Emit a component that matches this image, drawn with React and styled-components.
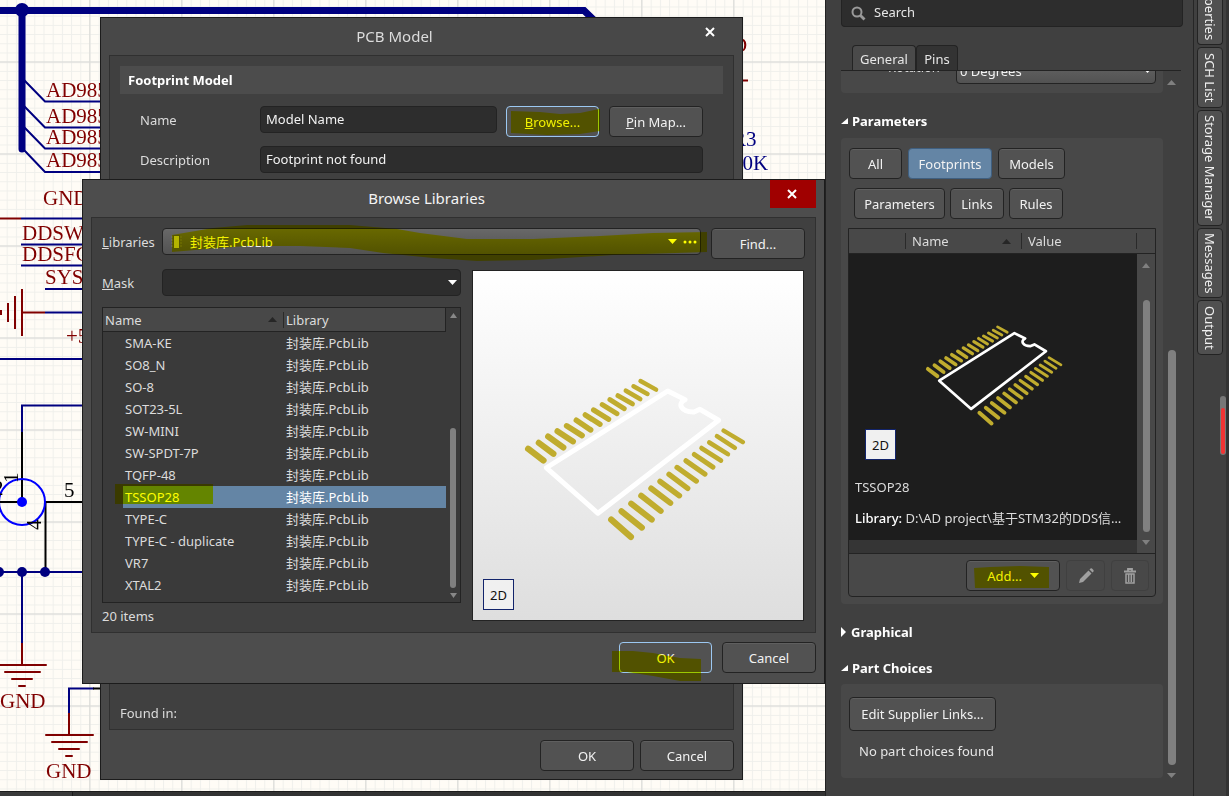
import React from "react";
import styled, { createGlobalStyle, css } from "styled-components";

const GlobalStyle = createGlobalStyle`
  *, *::before, *::after { box-sizing: border-box; }
  body {
    margin: 0;
    background: #404040;
    color: #dcdcdc;
    font: 13px/20px "Noto Sans", "Noto Sans CJK SC", sans-serif;
  }
  button, input, select { font: inherit; color: inherit; margin: 0; }
  h1, h2, h3, p { margin: 0; }
`;

const edge = "#232323";

/* ---------- page frame ---------- */

const Page = styled.div`
  display: grid;
  grid-template-columns: minmax(0, 1fr) 369px 35px;
  height: 100vh;
  overflow: hidden;
`;

const Editor = styled.main`
  display: flex;
  flex-direction: column;
  min-width: 0;
`;

const Canvas = styled.div`
  position: relative;
  flex: 1;
  overflow: hidden;
  background: #fffcf6;
`;

const Drawing = styled.svg`
  display: block;
  width: 100%;
  height: 100%;
`;

const StatusBar = styled.footer`
  height: 5px;
  background: #333;
  border-top: 1px solid #1c1c1c;
`;

const StatusTab = styled.div`
  width: 73px;
  height: 4px;
  border-right: 1px solid #1c1c1c;
  background: #3a3a3a;
`;

/* ---------- shared controls ---------- */

const Button = styled.button`
  display: inline-flex;
  align-items: center;
  justify-content: center;
  gap: 8px;
  flex: none;
  width: ${(p) => (p.$w ? `${p.$w}px` : "auto")};
  height: ${(p) => p.$h || 31}px;
  padding: 0;
  border: 1px solid ${edge};
  border-radius: 4px;
  background: #525252;
  box-shadow: inset 0 1px #5f5f5f;
  color: #f2f2f2;
  white-space: nowrap;
  ${(p) => p.$focused && css`border-color: #9cc8f2; box-shadow: none;`}
  ${(p) => p.$on && css`background: #6485a5; border-color: #3f5f80; box-shadow: none;`}
  ${(p) => p.$quiet && css`background: transparent; border-color: #404040; box-shadow: none; color: #909090;`}
`;

const Field = styled.input`
  width: ${(p) => (p.$w ? `${p.$w}px` : "100%")};
  height: 27px;
  padding: 0 5px 2px;
  border: 1px solid ${edge};
  border-radius: 4px;
  background: #2d2d2d;
  color: #f2f2f2;
  outline: none;
`;

const Combo = styled.div`
  display: flex;
  align-items: center;
  width: ${(p) => p.$w}px;
  height: 27px;
  border: 1px solid ${edge};
  border-radius: 4px;
  background: ${(p) => (p.$dark ? "#2d2d2d" : "linear-gradient(#686868, #525252)")};
  padding: 0 3px;
  gap: 6px;
  select, input {
    appearance: none;
    flex: 1;
    min-width: 0;
    border: 0;
    padding: 0;
    background: transparent;
    color: #f2f2f2;
    outline: none;
  }
`;

const Glyph = styled.svg`
  display: block;
  flex: none;
`;

const Arrow = ({ up, size = 9, color = "#fff" }) => (
  <Glyph width={size} height="5" viewBox="0 0 10 5" preserveAspectRatio="none">
    <path d={up ? "M0 5L5 0L10 5Z" : "M0 0L5 5L10 0Z"} fill={color} />
  </Glyph>
);

const DotsButton = styled.button`
  display: flex;
  padding: 0;
  border: 0;
  background: none;
`;

const Cross = () => (
  <Glyph width="10" height="10" viewBox="0 0 10 10">
    <path d="M1 1L9 9M9 1L1 9" stroke="#fff" strokeWidth="2" />
  </Glyph>
);

const ScrollTrack = styled.div`
  display: flex;
  flex-direction: column;
  align-items: center;
  width: ${(p) => p.$w}px;
  padding: ${(p) => p.$pad};
`;

const Thumb = styled.div`
  width: ${(p) => p.$w}px;
  height: ${(p) => p.$h}px;
  margin: auto 0 ${(p) => p.$gap}px;
  border-radius: 4px;
  background: #808080;
`;

/* ---------- dialog windows ---------- */

const Dialog = styled.section`
  position: absolute;
  left: ${(p) => p.$x}px;
  top: ${(p) => p.$y}px;
  display: flex;
  flex-direction: column;
  width: ${(p) => p.$w}px;
  height: ${(p) => p.$h}px;
  border: 1px solid #1c1c1c;
  background: ${(p) => p.$bg};
`;

const TitleBar = styled.header`
  display: flex;
  flex: none;
  height: 37px;
`;

const Title = styled.h1`
  flex: 1;
  font-size: 15px;
  font-weight: 400;
  line-height: 37px;
  text-align: center;
  color: ${(p) => p.$color};
`;

const CloseButton = styled.button`
  display: flex;
  align-items: center;
  justify-content: center;
  width: 46px;
  height: 28px;
  margin-right: 8px;
  padding: 0 2px 0 0;
  border: 0;
  background: ${(p) => (p.$hot ? "#a00000" : "transparent")};
`;

const Group = styled.div`
  flex: 1;
  display: flex;
  flex-direction: column;
  min-height: 0;
  margin: 0 8px;
  padding: 10px 10px 2px;
  border: 1px solid #303030;
  background: #404040;
`;

const SectionTitle = styled.h2`
  height: 28px;
  margin-bottom: 12px;
  padding-left: 8px;
  background: #4c4c4c;
  color: #fff;
  font-size: 13px;
  line-height: 28px;
`;

const FormRow = styled.div`
  display: flex;
  align-items: flex-start;
  height: 40px;
  padding-left: 20px;
`;

const Label = styled.label`
  flex: none;
  width: ${(p) => p.$w}px;
  line-height: 28px;
  color: #dcdcdc;
`;

const FoundIn = styled.p`
  line-height: 28px;
`;

const Actions = styled.div`
  display: flex;
  justify-content: flex-end;
  gap: ${(p) => p.$gap}px;
  padding: ${(p) => p.$pad};
`;

const Marker = styled.svg`
  position: absolute;
  inset: 0;
  pointer-events: none;
  mix-blend-mode: multiply;
  fill: #ff0;
`;

const Spacer = styled.div`
  flex: 1;
`;

/* ---------- browse dialog body ---------- */

const LibraryRow = styled.div`
  display: flex;
  height: 41px;
  gap: 10px;
`;

const Labelled = styled.div`
  display: flex;
`;

const BrowseBody = styled.div`
  display: flex;
  flex: 1;
  gap: 11px;
  min-height: 0;
`;

const ListColumn = styled.div`
  display: flex;
  flex-direction: column;
  width: 359px;
`;

const ListFrame = styled.div`
  display: flex;
  flex: none;
  height: 296px;
  margin-top: 10px;
  border: 1px solid ${edge};
  background: #3a3a3a;
`;

const List = styled.table`
  flex: 1;
  width: 344px;
  height: max-content;
  border-collapse: separate;
  border-spacing: 0;
  table-layout: fixed;
  th {
    height: 24px;
    padding: 0 2px;
    background: #484848;
    border-bottom: 1px solid ${edge};
    font-weight: 400;
    text-align: left;
  }
  td {
    height: 22px;
    padding: 0 2px;
    line-height: 20px;
    white-space: nowrap;
  }
  td:first-child { padding-left: 22px; }
  th:last-child { border-right: 1px solid ${edge}; }
`;

const ListRow = styled.tr`
  ${(p) => p.$selected && css`
    color: #fff;
    td { background: #6485a5; }
    td:first-child { background: linear-gradient(90deg, #3a3a3a 20px, #6485a5 20px); }
  `}
`;

const SortHead = styled.div`
  display: flex;
  align-items: center;
  justify-content: space-between;
  height: 16px;
  margin-right: -2px;
  padding-right: 6px;
  border-right: 1px solid #2a2a2a;
  line-height: 16px;
`;

const CountLabel = styled.p`
  padding-top: 3px;
`;

const Preview = styled.div`
  display: grid;
  flex: 1;
  height: 351px;
  margin: 1px 1px 0 0;
  border: 1px solid ${edge};
  background: linear-gradient(#fff, #dedede);
`;

const PreviewArt = styled.svg`
  grid-area: 1 / 1;
  width: 100%;
  height: 100%;
`;

const ModeButton = styled.button`
  grid-area: 1 / 1;
  align-self: end;
  z-index: 1;
  width: 31px;
  height: 31px;
  margin: ${(p) => p.$m};
  padding: 0;
  border: 1px solid #12246b;
  background: #f0f0f0;
  color: #111;
`;

/* ---------- properties panel ---------- */

const Panel = styled.aside`
  display: flex;
  flex-direction: column;
  min-width: 0;
  padding-left: 1px;
  border-left: 1px solid #222;
  border-right: 1px solid #262626;
  background: #404040;
`;

const SearchBox = styled.label`
  display: flex;
  align-items: center;
  gap: 8px;
  flex: none;
  height: 27px;
  margin: 0 10px 18px 14px;
  padding: 0 9px;
  border: 1px solid ${edge};
  border-top: 0;
  border-radius: 0 0 4px 4px;
  background: #2d2d2d;
  input {
    flex: 1;
    min-width: 0;
    padding: 0 0 2px;
    border: 0;
    background: none;
    color: #e6e6e6;
    outline: none;
    &::placeholder { color: #e6e6e6; opacity: 1; }
  }
`;

const Tabs = styled.div`
  display: flex;
  flex: none;
  margin: 0 12px 0 14px;
  padding-left: 11px;
  border-bottom: 1px solid ${edge};
`;

const Tab = styled.button`
  width: ${(p) => p.$w}px;
  height: 25px;
  padding: 1px 0 0;
  border: 1px solid ${edge};
  border-bottom: 0;
  border-radius: 4px 4px 0 0;
  background: ${(p) => (p.$on ? "#4a4a4a" : "#333")};
  color: #e6e6e6;
  line-height: 20px;
`;

const PanelScroll = styled.div`
  display: flex;
  flex: 1;
  min-height: 0;
  padding-left: 14px;
  overflow: hidden;
`;

const PanelContent = styled.div`
  flex: 1;
  min-width: 0;
`;

const Card = styled.div`
  padding: ${(p) => p.$pad};
  border-radius: 4px;
  background: #484848;
`;

const RotationRow = styled.div`
  display: flex;
  box-sizing: content-box;
  height: 13px;
  overflow: hidden;
  align-items: flex-end;
  justify-content: flex-end;
  padding: 0 7px 9px;
  border-radius: 0 0 4px 4px;
  background: #484848;
  label { width: 68px; height: 27px; line-height: 20px; }
`;

const Heading = styled.h3`
  display: flex;
  align-items: center;
  gap: ${(p) => p.$gap || 4}px;
  height: ${(p) => p.$h}px;
  padding-top: ${(p) => p.$top}px;
  color: #fff;
  font-size: 13px;
  line-height: 20px;
`;

const Filters = styled.div`
  display: flex;
  gap: ${(p) => p.$gap}px;
  padding-left: ${(p) => p.$left}px;
  margin-bottom: 9px;
`;

const ParamFrame = styled.div`
  border: 1px solid ${edge};
  border-radius: 0 0 4px 4px;
  margin: 0 7px 0 -1px;
`;

const ParamHead = styled.div`
  display: grid;
  grid-template-columns: 56px 116px 115px 1fr;
  align-items: center;
  height: 25px;
  border-bottom: 1px solid ${edge};
  > div {
    display: flex;
    align-items: center;
    justify-content: space-between;
    height: 16px;
    padding: 0 10px 0 6px;
    border-left: 1px solid #2a2a2a;
    line-height: 16px;
  }
  > div:first-child { border-left: 0; }
`;

const ParamBody = styled.div`
  display: flex;
  height: 300px;
  border-bottom: 1px solid ${edge};
`;

const ParamCell = styled.div`
  flex: 1;
  min-width: 0;
  border-bottom: 13px solid #353535;
  background: #1d1d1d;
`;

const SmallPreview = styled.div`
  display: grid;
  height: 220px;
`;

const ParamText = styled.p`
  margin-top: ${(p) => p.$top}px;
  padding: 0 6px;
  overflow: hidden;
  white-space: nowrap;
  text-overflow: ellipsis;
  b { color: #fff; font-weight: 500; }
`;

const ParamFoot = styled.div`
  display: flex;
  justify-content: flex-end;
  gap: ${(p) => p.$gap}px;
  height: 42px;
  padding: 6px 6px 0 0;
  position: relative;
`;

const Note = styled.p`
  padding: 10px 10px 17px;
  color: #e6e6e6;
`;

/* ---------- right rail ---------- */

const Rail = styled.nav`
  display: flex;
  flex-direction: column;
  gap: 2px;
  position: relative;
  padding-left: 3px;
  border-right: 3px solid #333;
  background: #404040;
`;

const RailTab = styled.button`
  display: flex;
  align-items: center;
  justify-content: ${(p) => (p.$cut ? "flex-end" : "center")};
  width: 26px;
  height: ${(p) => p.$h}px;
  padding: ${(p) => (p.$cut ? "0 0 4px" : "0")};
  overflow: hidden;
  border: 1px solid ${edge};
  border-top-width: ${(p) => (p.$cut ? 0 : 1)}px;
  border-radius: ${(p) => (p.$cut ? "0 0 4px 4px" : "4px")};
  background: #505050;
  color: #f0f0f0;
  writing-mode: vertical-rl;
  white-space: nowrap;
`;

const EdgeScroll = styled.div`
  position: absolute;
  top: 396px;
  right: 0;
  width: 6px;
  height: 59px;
  padding: 12px 1px 1px;
  border-radius: 3px;
  background: #777;
  &::after {
    content: "";
    display: block;
    height: 46px;
    border-radius: 2px;
    background: #f03434;
  }
`;

/* ---------- drawings ---------- */

const padRows = [
  [265,565,311,600],[297,547,341,580],[325,528,371,561],[353,512,400,543],[381,496,427,525],
  [410,479,453,508],[437,463,481,491],[462,448,507,476],[488,432,532,459],[511,417,554,444],
  [535,405,579,430],[559,390,602,415],[582,377,624,400],[603,361,650,387],
  [515,778,574,830],[546,753,607,802],[575,730,637,778],[605,706,664,752],[635,684,693,728],
  [662,663,720,706],[689,642,745,684],[713,621,771,662],[740,601,797,641],[765,582,821,620],
  [787,563,845,600],[810,546,866,581],[833,527,887,562],[853,510,911,545],
];

const FootprintArt = ({ viewBox, outline }) => (
  <PreviewArt viewBox={viewBox} preserveAspectRatio="xMidYMid meet" role="img" aria-label="TSSOP28">
    {padRows.map(([x1, y1, x2, y2], i) => (
      <line key={i} x1={x1} y1={y1 + 3} x2={x2} y2={y2 + 3} stroke="#c0ac2e" strokeWidth={19 - (i % 14) * 0.45} strokeLinecap="round" />
    ))}
    <path
      d="M320 625L685 394L737 420C712 432 726 458 764 457L782 449L838 482L475 762Z"
      fill="none" stroke="#fff" strokeWidth={outline} strokeLinejoin="round"
    />
  </PreviewArt>
);

const Ground = ({ x, y }) => (
  <path
    d={`M${x - 23} ${y}h47M${x - 17} ${y + 7}h35M${x - 10} ${y + 14}h20M${x - 3} ${y + 21}h6`}
    stroke="#800000" strokeWidth="2" strokeLinecap="round"
  />
);

const NetText = styled.text`
  font-family: "Liberation Serif", serif;
  font-size: 21px;
  fill: ${(p) => p.$c || "#800000"};
`;

const Schematic = () => (
  <Drawing>
    <defs>
      <pattern id="minor" x="-2.5" y="-30.3" width="9.2" height="9.2" patternUnits="userSpaceOnUse">
        <path d="M0 .5H9.2M.5 0V9.2" stroke="#efefeb" strokeWidth="1" />
      </pattern>
      <pattern id="major" x="-3" y="-30.8" width="92" height="92" patternUnits="userSpaceOnUse">
        <path d="M0 .8H92M.8 0V92" stroke="#dcdcd9" strokeWidth="1.2" />
      </pattern>
    </defs>
    <rect width="100%" height="100%" fill="url(#minor)" />
    <rect width="100%" height="100%" fill="url(#major)" />
    <g fill="none" stroke="#000080" strokeWidth="2">
      <path d="M0 10.500H584L598 24" strokeWidth="7" />
      <path d="M22 10V149" strokeWidth="7" strokeLinecap="round" />
      <path d="M24 80L45 101.500H110M24 106L45 127.500H110M24 127L45 148.500H110M24 150L45 172H110" />
      <path d="M21 218.500H90M21 244.500H90M21 265.500H90M45 289H90M45 312.500H90M0 359H90" />
      <path d="M22 434V405.500H90M0 572H90M22 572V644M69 714V688.500H94" />
    </g>
    <g fill="none" stroke="#800000" strokeWidth="2">
      <path d="M0 218.500H21M45 312.500H22M22 289V336M15 296V329M8 303V322M1 310V315M22 643V665M69 713V735M740 80.500H748" />
    </g>
    <g fill="none" stroke="#000" strokeWidth="2">
      <path d="M22 432V502M0 502H22M45 502H90M45.500 502V572M93 688.500H102" />
    </g>
    <circle cx="22" cy="502" r="23" fill="none" stroke="#00f" strokeWidth="2" />
    <circle cx="22" cy="502" r="5" fill="#00f" />
    <g fill="#000080">
      <circle cx="22" cy="10" r="7" />
      <circle cx="-1" cy="572" r="5" />
      <circle cx="22" cy="572" r="5" />
      <circle cx="45" cy="572" r="5" />
    </g>
    <Ground x={22} y={665} />
    <Ground x={69} y={735} />
    <NetText x="46" y="97">AD985</NetText>
    <NetText x="46" y="123">AD985</NetText>
    <NetText x="46" y="144">AD985</NetText>
    <NetText x="46" y="167">AD985</NetText>
    <NetText x="43" y="205">GND</NetText>
    <NetText x="22" y="240">DDSW</NetText>
    <NetText x="22" y="261">DDSFC</NetText>
    <NetText x="45" y="284">SYS</NetText>
    <NetText x="66" y="343">+5</NetText>
    <NetText x="0" y="708">GND</NetText>
    <NetText x="46" y="778">GND</NetText>
    <NetText x="64" y="497" $c="#000">5</NetText>
    <NetText x="-7" y="495" $c="#000">2</NetText>
    <NetText transform="translate(18 483) rotate(-90)" $c="#000">1</NetText>
    <NetText transform="translate(41 530) rotate(-90)" $c="#000">4</NetText>
    <NetText x="732" y="52">D</NetText>
    <NetText x="732" y="146" $c="#000080">R3</NetText>
    <NetText x="732" y="170" $c="#000080">10K</NetText>
  </Drawing>
);

const footprints = [
  "SMA-KE", "SO8_N", "SO-8", "SOT23-5L", "SW-MINI", "SW-SPDT-7P",
  "TQFP-48", "TSSOP28", "TYPE-C", "TYPE-C - duplicate", "VR7", "XTAL2",
];

const PcbModelDialog = () => (
  <Dialog $x={100} $y={17} $w={643} $h={763} $bg="#484848" aria-label="PCB Model">
    <TitleBar>
      <Title $color="#dcdcdc">PCB Model</Title>
      <CloseButton aria-label="Close"><Cross /></CloseButton>
    </TitleBar>
    <Group>
      <SectionTitle>Footprint Model</SectionTitle>
      <FormRow>
        <Label $w={120} htmlFor="model-name">Name</Label>
        <Field id="model-name" $w={237} defaultValue="Model Name" />
        <Actions $gap={10} $pad="0 0 0 9px">
          <Button $w={93} $focused><span><u>B</u>rowse...</span></Button>
          <Button $w={94}><span><u>P</u>in Map...</span></Button>
        </Actions>
      </FormRow>
      <FormRow>
        <Label $w={120} htmlFor="model-desc">Description</Label>
        <Field id="model-desc" $w={443} defaultValue="Footprint not found" />
      </FormRow>
      <Spacer />
      <FoundIn>Found in:</FoundIn>
    </Group>
    <Actions $gap={6} $pad="10px 8px 8px">
      <Button $w={94}>OK</Button>
      <Button $w={94}>Cancel</Button>
    </Actions>
    <Marker viewBox="101 18 641 761">
      <path d="M511 111L540 112L560 114L580 113L599 109H600V131L580 134L547 135L511 133Z" />
    </Marker>
  </Dialog>
);

const BrowseDialog = () => (
  <Dialog $x={82} $y={179} $w={743} $h={505} $bg="#4d4d4d" aria-label="Browse Libraries">
    <TitleBar>
      <Title $color="#f4f4f4">Browse Libraries</Title>
      <CloseButton $hot aria-label="Close"><Cross /></CloseButton>
    </TitleBar>
    <Group>
      <LibraryRow>
        <Labelled>
          <Label $w={60} htmlFor="libraries"><u>L</u>ibraries</Label>
          <Combo $w={539}>
            <Glyph width="18" height="14" viewBox="0 0 18 14">
              <path d="M5 2H16M5 5H16M5 8H16M5 11H16" stroke="#777" />
              <rect x="7.500" y=".5" width="6" height="13" fill="#b5b590" stroke="#555" />
            </Glyph>
            <select id="libraries"><option>封装库.PcbLib</option></select>
            <Arrow />
            <DotsButton aria-label="Library list">
              <Glyph width="14" height="4" viewBox="0 0 14 4" fill="#fff">
                <circle cx="2" cy="2" r="1.500" />
                <circle cx="7" cy="2" r="1.500" />
                <circle cx="12" cy="2" r="1.500" />
              </Glyph>
            </DotsButton>
          </Combo>
        </Labelled>
        <Button $w={94}>Find...</Button>
      </LibraryRow>
      <BrowseBody>
        <ListColumn>
          <Labelled>
            <Label $w={60} htmlFor="mask"><u>M</u>ask</Label>
            <Combo $w={299} $dark>
              <input id="mask" />
              <Arrow />
            </Combo>
          </Labelled>
          <ListFrame>
            <List>
              <colgroup><col width="181" /><col /></colgroup>
              <thead>
                <tr>
                  <th><SortHead>Name <Arrow up color="#262626" /></SortHead></th>
                  <th>Library</th>
                </tr>
              </thead>
              <tbody>
                {footprints.map((name) => (
                  <ListRow key={name} $selected={name === "TSSOP28"}>
                    <td>{name}</td>
                    <td>封装库.PcbLib</td>
                  </ListRow>
                ))}
              </tbody>
            </List>
            <ScrollTrack $w={14} $pad="5px 0 4px">
              <Arrow up size={7} color="#888" />
              <Thumb $w={6} $h={160} $gap={5} />
              <Arrow size={7} color="#888" />
            </ScrollTrack>
          </ListFrame>
          <CountLabel>20 items</CountLabel>
        </ListColumn>
        <Preview>
          <FootprintArt viewBox="99 33 993 1050" outline={15} />
          <ModeButton $m="0 0 10px 10px">2D</ModeButton>
        </Preview>
      </BrowseBody>
    </Group>
    <Actions $gap={10} $pad="9px 8px 10px">
      <Button $w={93} $focused>OK</Button>
      <Button $w={94}>Cancel</Button>
    </Actions>
    <Marker viewBox="83 180 741 503">
      <path d="M172 235L213 228L247 225H350L397 229L420 233L467 239H533L600 236L653 233L707 232V252L613 255L533 260L477 261L433 258L383 253L350 248L300 246H247L207 249L172 252Z" />
      <path d="M115 484H213V504H115Z" />
      <path d="M612 651H633L653 653L680 658L701 659V681H680L653 676L627 672H612Z" />
    </Marker>
  </Dialog>
);

const Expander = ({ open }) => (
  <Glyph width="7" height="10" viewBox="0 0 7 10">
    <path d={open ? "M7 2V8H0Z" : "M0 0L5 5L0 10Z"} fill="#fff" />
  </Glyph>
);

const PropertiesPanel = () => (
  <Panel>
    <SearchBox>
      <Glyph width="15" height="15" viewBox="0 0 15 15" fill="none" stroke="#999">
        <circle cx="6" cy="6" r="4.500" strokeWidth="2" />
        <path d="M9.500 9.500L13.500 13.500" strokeWidth="2.800" />
      </Glyph>
      <input placeholder="Search" aria-label="Search" />
    </SearchBox>
    <Tabs>
      <Tab $w={64} $on>General</Tab>
      <Tab $w={42}>Pins</Tab>
    </Tabs>
    <PanelScroll>
      <PanelContent>
        <RotationRow>
          <label htmlFor="rotation">Rotation</label>
          <Combo $w={200}>
            <select id="rotation"><option>0 Degrees</option></select>
            <Arrow />
          </Combo>
        </RotationRow>
        <Heading $h={45} $top={10}><Expander open />Parameters</Heading>
        <Card $pad="10px 0 7px 8px">
          <Filters $gap={6} $left={0}>
            <Button $w={53}>All</Button>
            <Button $w={84} $on>Footprints</Button>
            <Button $w={67}>Models</Button>
          </Filters>
          <Filters $gap={5} $left={5}>
            <Button $w={91}>Parameters</Button>
            <Button $w={54}>Links</Button>
            <Button $w={54}>Rules</Button>
          </Filters>
          <ParamFrame>
            <ParamHead>
              <div />
              <div>Name <Arrow up color="#262626" /></div>
              <div>Value</div>
              <div />
            </ParamHead>
            <ParamBody>
              <ParamCell>
                <SmallPreview>
                  <FootprintArt viewBox="-118 10 1398 1068" outline={13} />
                  <ModeButton $m="0 0 14px 16px">2D</ModeButton>
                </SmallPreview>
                <ParamText $top={3}>TSSOP28</ParamText>
                <ParamText $top={11}><b>Library:</b> D:\AD project\基于STM32的DDS信号发生器</ParamText>
              </ParamCell>
              <ScrollTrack $w={18} $pad="9px 0 8px">
                <Arrow up size={8} color="#808080" />
                <Thumb $w={7} $h={232} $gap={8} />
                <Arrow size={8} color="#808080" />
              </ScrollTrack>
            </ParamBody>
            <ParamFoot $gap={6}>
              <Button $w={94}>Add... <Arrow /></Button>
              <Button $w={39} $quiet aria-label="Edit">
                <Glyph width="16" height="16" viewBox="0 0 16 16" fill="#a0a0a0">
                  <path d="M1 15L2 11L10.500 2.500L13.500 5.500L5 14ZM11.500 1.500L12.500 .5Q13.300 0 14 .6L15.400 2Q16 2.700 15.500 3.500L14.500 4.500Z" />
                </Glyph>
              </Button>
              <Button $w={38} $quiet aria-label="Delete">
                <Glyph width="14" height="16" viewBox="0 0 14 16" fill="none" stroke="#a0a0a0">
                  <path d="M1 3.500H13M5 3V1H9V3" strokeWidth="1.800" />
                  <path d="M3 5.500V15H11V5.500M5.700 6V14M8.300 6V14M2.500 6H11.500" strokeWidth="1.500" />
                </Glyph>
              </Button>
              <Marker viewBox="849 555 306 42">
                <path d="M974 569L990 568L1020 567L1049 568V589H975Z" />
              </Marker>
            </ParamFoot>
          </ParamFrame>
        </Card>
        <Heading $h={46} $top={10} $gap={3}><Expander />Graphical</Heading>
        <Heading $h={34} $top={2}><Expander open />Part Choices</Heading>
        <Card $pad="13px 8px 0">
          <Button $w={147} $h={34}>Edit Supplier Links...</Button>
          <Note>No part choices found</Note>
        </Card>
      </PanelContent>
      <ScrollTrack $w={30} $pad="9px 13px 18px 0">
        <Arrow up size={9} color="#808080" />
        <Thumb $w={8} $h={415} $gap={8} />
        <Arrow size={9} color="#808080" />
      </ScrollTrack>
    </PanelScroll>
  </Panel>
);

export default function App() {
  return (
    <>
      <GlobalStyle />
      <Page>
        <Editor>
          <Canvas>
            <Schematic />
            <PcbModelDialog />
            <BrowseDialog />
          </Canvas>
          <StatusBar><StatusTab /></StatusBar>
        </Editor>
        <PropertiesPanel />
        <Rail>
          <RailTab $h={45} $cut>Properties</RailTab>
          <RailTab $h={61}>SCH List</RailTab>
          <RailTab $h={116}>Storage Manager</RailTab>
          <RailTab $h={70}>Messages</RailTab>
          <RailTab $h={55}>Output</RailTab>
          <EdgeScroll />
        </Rail>
      </Page>
    </>
  );
}
